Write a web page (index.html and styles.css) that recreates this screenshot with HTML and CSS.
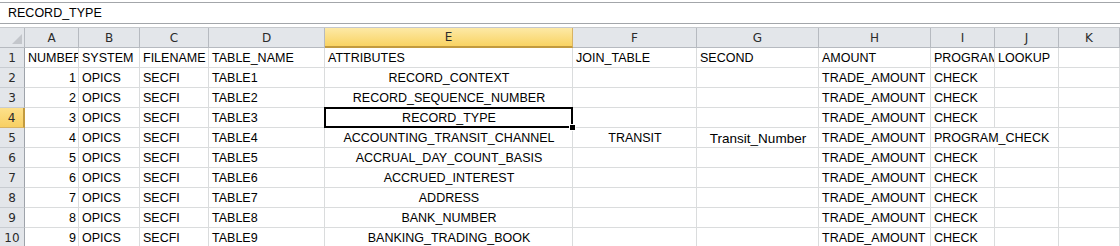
FILE: index.html
```html
<!DOCTYPE html>
<html>
<head>
<meta charset="utf-8">
<link rel="stylesheet" href="styles.css">
</head>
<body>
<div class="fbar"><span class="ftext">RECORD_TYPE</span></div>
<div class="gap"></div>
<div class="sheet">
  <div class="h corner"><svg width="12" height="12" viewBox="0 0 12 12"><polygon points="11,1 11,11 1,11" fill="#c3c6cb"/></svg></div>
  <div class="h">A</div><div class="h">B</div><div class="h">C</div><div class="h">D</div>
  <div class="h hsel">E</div><div class="h">F</div><div class="h">G</div><div class="h">H</div>
  <div class="h">I</div><div class="h">J</div><div class="h">K</div>

  <div class="rh">1</div><div class="c">NUMBER</div><div class="c">SYSTEM</div><div class="c">FILENAME</div><div class="c">TABLE_NAME</div><div class="c">ATTRIBUTES</div><div class="c">JOIN_TABLE</div><div class="c">SECOND</div><div class="c">AMOUNT</div><div class="c">PROGRAM</div><div class="c">LOOKUP</div><div class="c"></div>

  <div class="rh">2</div><div class="c num">1</div><div class="c">OPICS</div><div class="c">SECFI</div><div class="c">TABLE1</div><div class="c ctr">RECORD_CONTEXT</div><div class="c"></div><div class="c"></div><div class="c">TRADE_AMOUNT</div><div class="c">CHECK</div><div class="c"></div><div class="c"></div>

  <div class="rh">3</div><div class="c num">2</div><div class="c">OPICS</div><div class="c">SECFI</div><div class="c">TABLE2</div><div class="c ctr">RECORD_SEQUENCE_NUMBER</div><div class="c"></div><div class="c"></div><div class="c">TRADE_AMOUNT</div><div class="c">CHECK</div><div class="c"></div><div class="c"></div>

  <div class="rh rsel">4</div><div class="c num">3</div><div class="c">OPICS</div><div class="c">SECFI</div><div class="c">TABLE3</div><div class="c ctr sel">RECORD_TYPE<span class="handle"></span></div><div class="c"></div><div class="c"></div><div class="c">TRADE_AMOUNT</div><div class="c">CHECK</div><div class="c"></div><div class="c"></div>

  <div class="rh">5</div><div class="c num">4</div><div class="c">OPICS</div><div class="c">SECFI</div><div class="c">TABLE4</div><div class="c ctr">ACCOUNTING_TRANSIT_CHANNEL</div><div class="c ctr">TRANSIT</div><div class="c ctr mixed">Transit_Number</div><div class="c">TRADE_AMOUNT</div><div class="c span2">PROGRAM_CHECK</div><div class="c"></div>

  <div class="rh">6</div><div class="c num">5</div><div class="c">OPICS</div><div class="c">SECFI</div><div class="c">TABLE5</div><div class="c ctr">ACCRUAL_DAY_COUNT_BASIS</div><div class="c"></div><div class="c"></div><div class="c">TRADE_AMOUNT</div><div class="c">CHECK</div><div class="c"></div><div class="c"></div>

  <div class="rh">7</div><div class="c num">6</div><div class="c">OPICS</div><div class="c">SECFI</div><div class="c">TABLE6</div><div class="c ctr">ACCRUED_INTEREST</div><div class="c"></div><div class="c"></div><div class="c">TRADE_AMOUNT</div><div class="c">CHECK</div><div class="c"></div><div class="c"></div>

  <div class="rh">8</div><div class="c num">7</div><div class="c">OPICS</div><div class="c">SECFI</div><div class="c">TABLE7</div><div class="c ctr">ADDRESS</div><div class="c"></div><div class="c"></div><div class="c">TRADE_AMOUNT</div><div class="c">CHECK</div><div class="c"></div><div class="c"></div>

  <div class="rh">9</div><div class="c num">8</div><div class="c">OPICS</div><div class="c">SECFI</div><div class="c">TABLE8</div><div class="c ctr">BANK_NUMBER</div><div class="c"></div><div class="c"></div><div class="c">TRADE_AMOUNT</div><div class="c">CHECK</div><div class="c"></div><div class="c"></div>

  <div class="rh">10</div><div class="c num">9</div><div class="c">OPICS</div><div class="c">SECFI</div><div class="c">TABLE9</div><div class="c ctr">BANKING_TRADING_BOOK</div><div class="c"></div><div class="c"></div><div class="c">TRADE_AMOUNT</div><div class="c">CHECK</div><div class="c"></div><div class="c"></div>
</div>
</body>
</html>
```

FILE: styles.css
```css
html, body {
  margin: 0;
  padding: 0;
  width: 1120px;
  height: 246px;
  overflow: hidden;
  background: #ffffff;
  font-family: "Liberation Sans", Arial, sans-serif;
  font-size: 12.5px;
  color: #000;
}

.fbar {
  margin-top: 2px;
  height: 22px;
  box-sizing: border-box;
  border-top: 1px solid #a3a6aa;
  border-bottom: 1px solid #a3a6aa;
  background: #fff;
  display: flex;
  align-items: center;
  padding-left: 8px;
}

.ftext {
  line-height: 20px;
}

.gap {
  height: 3px;
  background: #fff;
}

.sheet {
  display: grid;
  grid-template-columns: 25px 54px 61px 69px 116px 248px 124px 122px 112px 64px 64px 61px;
  grid-auto-rows: 20px;
  border-top: 1px solid #c5c8cc;
}

.h, .rh {
  box-sizing: border-box;
  background: #e3e6ea;
  border-right: 1px solid #b6bac0;
  border-bottom: 1px solid #b6bac0;
  color: #2b2b2b;
  font-family: "DejaVu Sans", "Liberation Sans", sans-serif;
  font-size: 12px;
  display: flex;
  align-items: center;
  justify-content: center;
}

.h {
  height: 20px;
}

.corner {
  justify-content: flex-end;
  align-items: flex-end;
  padding: 0 1px 2px 0;
}

.corner svg {
  display: block;
}

.rh {
  border-bottom-color: #c8ccd1;
  border-right-color: #9ea3aa;
}

.hsel {
  background: linear-gradient(#fde9a6, #f9d363);
  border-bottom: 2px solid #c29a3f;
  border-right-color: #d8b363;
}

.rsel {
  background: linear-gradient(#fde08a, #f8d063);
  border-right: 2px solid #c29a3f;
  border-bottom-color: #d8b363;
}

.c {
  box-sizing: border-box;
  border-right: 1px solid #dadcdd;
  border-bottom: 1px solid #dadcdd;
  padding: 1px 2px 0 3px;
  white-space: nowrap;
  overflow: hidden;
  line-height: 19px;
  position: relative;
}

.num {
  text-align: right;
}

.ctr {
  text-align: center;
}

.mixed {
  font-size: 13.5px;
}

.span2 {
  grid-column: span 2;
}

.sel {
  overflow: visible;
  z-index: 2;
}

.sel::after {
  content: "";
  position: absolute;
  left: -1px;
  top: -1px;
  right: -1px;
  bottom: -1px;
  border: 2px solid #000;
  pointer-events: none;
}

.handle {
  position: absolute;
  right: -4px;
  bottom: -4px;
  width: 5px;
  height: 5px;
  background: #000;
  border: 1px solid #fff;
  z-index: 3;
}
```
